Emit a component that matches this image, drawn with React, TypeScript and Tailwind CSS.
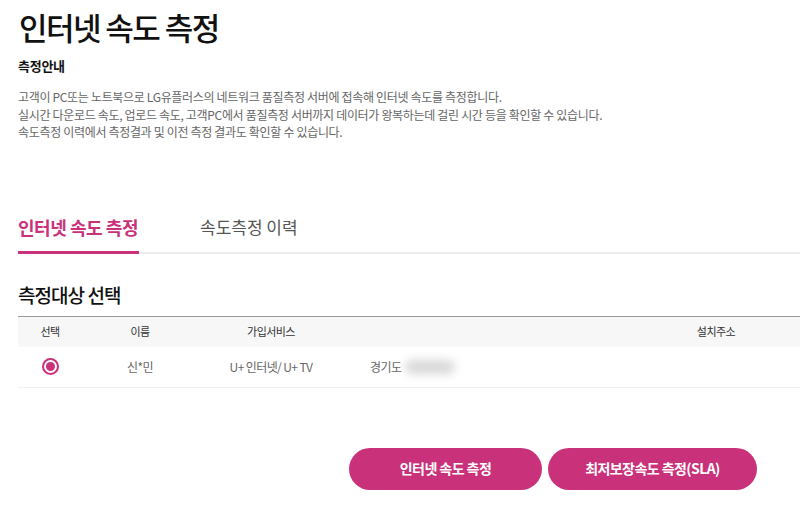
import React from "react";

const font = { fontFamily: '"Noto Sans CJK KR", "Noto Sans", sans-serif' };

export default function App() {
  return (
    <div className="w-[800px] h-[511px] overflow-hidden bg-white" style={font}>
      <div className="w-[1070px] ml-[18px]">
        <h1 className="pt-[7px] pl-[1px] text-[31px] leading-[40px] font-medium text-[#111] tracking-[-0.05em]">
          인터넷 속도 측정
        </h1>
        <h2 className="mt-[10px] text-[13px] leading-[18px] font-bold text-[#111] tracking-[-0.02em]">
          측정안내
        </h2>
        <div className="mt-[13px] text-[12px] leading-[17.5px] text-[#666] tracking-[-0.027em]">
          <p>고객이 PC또는 노트북으로 LG유플러스의 네트워크 품질측정 서버에 접속해 인터넷 속도를 측정합니다.</p>
          <p>실시간 다운로드 속도, 업로드 속도, 고객PC에서 품질측정 서버까지 데이터가 왕복하는데 걸린 시간 등을 확인할 수 있습니다.</p>
          <p>속도측정 이력에서 측정결과 및 이전 측정 결과도 확인할 수 있습니다.</p>
        </div>

        <div className="mt-[73px] flex items-end border-b-2 border-[#ececec]">
          <div className="w-[121px] whitespace-nowrap -mb-[2px] border-b-[3px] border-[#c9317a] pb-[11px] text-[18px] leading-[26px] font-bold text-[#c9317a] tracking-[-0.025em]">
            인터넷 속도 측정
          </div>
          <div className="ml-[61px] whitespace-nowrap pb-[12px] text-[17px] leading-[26px] text-[#555]">
            속도측정 이력
          </div>
        </div>

        <h3 className="mt-[28px] text-[19px] leading-[26px] font-medium text-[#111] tracking-[-0.05em]">
          측정대상 선택
        </h3>

        <div className="mt-[8px] border-t border-[#999]">
          <div className="grid grid-cols-[64px_116px_146px_1fr] h-[30px] items-center bg-[#f7f7f7] text-[11px] text-[#333] tracking-[-0.05em]">
            <div className="text-center">선택</div>
            <div className="text-center">이름</div>
            <div className="text-center">가입서비스</div>
            <div className="text-center">설치주소</div>
          </div>
          <div className="grid grid-cols-[64px_116px_146px_1fr] h-[41px] items-center border-b border-[#f0f0f0] text-[12px] text-[#666] tracking-[-0.05em]">
            <div className="flex justify-center">
              <span className="w-[17px] h-[17px] rounded-full border-2 border-[#c9317a] flex items-center justify-center">
                <span className="w-[9px] h-[9px] rounded-full bg-[#c9317a]" />
              </span>
            </div>
            <div className="text-center">신*민</div>
            <div className="text-center">U+ 인터넷/ U+ TV</div>
            <div className="pl-[26px] flex items-center">
              <span>경기도</span>
              <span className="ml-[4px] w-[50px] h-[14px] rounded-full bg-[#d8d8d8] blur-[5px]" />
            </div>
          </div>
        </div>

        <div className="mt-[60px] flex justify-center gap-[6px]">
          <button className="w-[193px] h-[42px] rounded-full bg-[#c9317a] text-white text-[14px] font-bold tracking-[-0.04em]">
            인터넷 속도 측정
          </button>
          <button className="w-[209px] h-[42px] rounded-full bg-[#c9317a] text-white text-[14px] font-bold tracking-[-0.04em]">
            최저보장속도 측정(SLA)
          </button>
        </div>
      </div>
    </div>
  );
}
